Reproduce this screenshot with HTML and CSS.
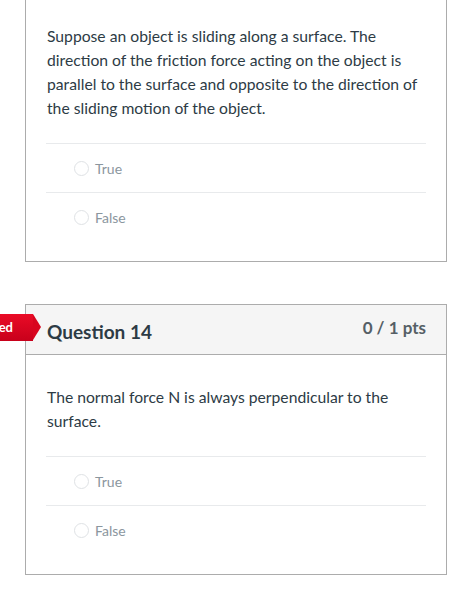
FILE: index.html
```html
<!DOCTYPE html>
<html lang="en">
<head>
<meta charset="utf-8">
<title>Quiz</title>
<link rel="stylesheet" href="styles.css">
</head>
<body>
<div class="quiz">
  <div class="card card-first">
    <div class="card-body">
      <div class="q-text">Suppose an object is sliding along a surface. The direction of the friction force acting on the object is parallel to the surface and opposite to the direction of the sliding motion of the object.</div>
      <div class="answers">
        <div class="answer"><span class="radio"></span><span class="label">True</span></div>
        <div class="answer"><span class="radio"></span><span class="label">False</span></div>
      </div>
    </div>
  </div>

  <div class="card">
    <div class="flag">Unanswered</div>
    <div class="card-head">
      <h2 class="q-title">Question 14</h2>
      <span class="q-pts">0 / 1 pts</span>
    </div>
    <div class="card-body">
      <div class="q-text">The normal force N is always perpendicular to the surface.</div>
      <div class="answers">
        <div class="answer"><span class="radio"></span><span class="label">True</span></div>
        <div class="answer"><span class="radio"></span><span class="label">False</span></div>
      </div>
    </div>
  </div>
</div>
</body>
</html>
```

FILE: styles.css
```css
html, body {
  margin: 0;
  padding: 0;
  background: #ffffff;
}
body {
  font-family: Lato, "Open Sans", "Liberation Sans", sans-serif;
  color: #2d3b45;
  overflow: hidden;
}
.quiz {
  display: flex;
  flex-direction: column;
  gap: 42px;
  padding-left: 25px;
  width: 422px;
  margin-top: -7px;
}
.card {
  position: relative;
  border: 1px solid #acacac;
  background: #fff;
}
.card-head {
  display: flex;
  justify-content: space-between;
  align-items: flex-start;
  height: 49px;
  background: #f5f5f5;
  border-bottom: 1px solid #acacac;
  padding: 0 20px 0 21px;
}
.q-title {
  margin: 14px 0 0;
  font-size: 19px;
  font-weight: 700;
  line-height: 26px;
  color: #2d3b45;
}
.q-pts {
  margin-top: 12px;
  font-size: 17px;
  font-weight: 700;
  line-height: 22px;
  color: #555f66;
}
.card-body {
  padding: 30px 20px 20px 20px;
}
.q-text {
  font-size: 15.7px;
  line-height: 24px;
  padding-left: 1px;
  margin-bottom: 23px;
}
.answers {
  display: flex;
  flex-direction: column;
}
.answer {
  display: flex;
  align-items: center;
  height: 48px;
  border-top: 1px solid #e8eaec;
  padding-left: 28px;
}
.radio {
  flex: none;
  width: 13px;
  height: 13px;
  border: 1px solid #dfe2e5;
  border-radius: 50%;
  background: #fff;
  margin-right: 6px;
}
.label {
  font-size: 14px;
  color: #8b969e;
}
.flag {
  position: absolute;
  top: 9px;
  right: calc(100% - 7px);
  height: 27px;
  line-height: 27px;
  padding: 0 20px 0 10px;
  background: linear-gradient(#ea0b26, #c8001b);
  color: #fff;
  font-size: 13px;
  font-weight: 700;
  white-space: nowrap;
}
.flag::after {
  content: "";
  position: absolute;
  left: 100%;
  top: 0;
  border-top: 13.5px solid transparent;
  border-bottom: 13.5px solid transparent;
  border-left: 8px solid #d8051f;
}
```
